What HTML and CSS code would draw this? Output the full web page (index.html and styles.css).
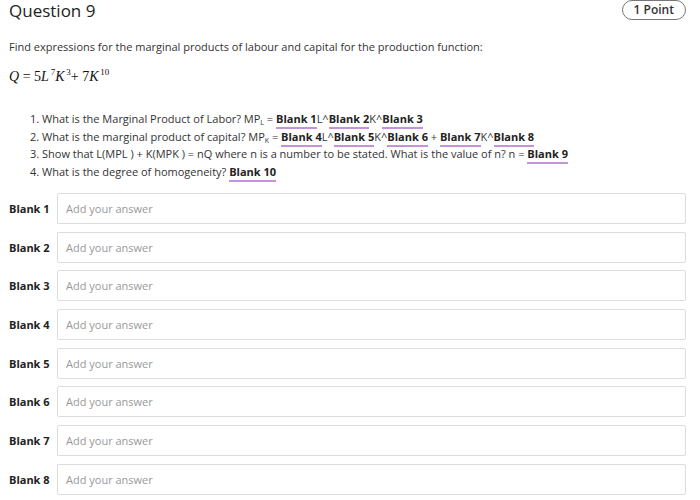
FILE: index.html
```html
<!DOCTYPE html>
<html lang="en">
<head>
    <meta charset="UTF-8">
    <title>Question 9</title>
    <link rel="stylesheet" href="styles.css">
</head>
<body>
    <div id="question">
        <div class="head">
            <span class="title">Question 9</span>
            <span class="points">1 Point</span>
        </div>

        <p class="prompt">Find expressions for the marginal products of labour and capital for the production function:</p>

        <p class="formula"><i>Q</i> = 5<i>L</i><sup>&thinsp;7</sup><i>K</i><sup>&thinsp;3</sup>+ 7<i>K</i><sup>&thinsp;10</sup></p>

        <ol class="parts">
            <li>What is the Marginal Product of Labor? MP<sub>L</sub> = <b class="blank">Blank 1</b>L^<b class="blank">Blank 2</b>K^<b class="blank">Blank 3</b></li>
            <li>What is the marginal product of capital? MP<sub>K</sub> = <b class="blank">Blank 4</b>L^<b class="blank">Blank 5</b>K^<b class="blank">Blank 6</b> + <b class="blank">Blank 7</b>K^<b class="blank">Blank 8</b></li>
            <li>Show that L(MPL ) + K(MPK ) = nQ where n is a number to be stated. What is the value of n? n = <b class="blank">Blank 9</b></li>
            <li>What is the degree of homogeneity? <b class="blank">Blank 10</b></li>
        </ol>

        <div class="answers">
            <label class="lbl">Blank 1</label><input class="box" placeholder="Add your answer">
            <label class="lbl">Blank 2</label><input class="box" placeholder="Add your answer">
            <label class="lbl">Blank 3</label><input class="box" placeholder="Add your answer">
            <label class="lbl">Blank 4</label><input class="box" placeholder="Add your answer">
            <label class="lbl">Blank 5</label><input class="box" placeholder="Add your answer">
            <label class="lbl">Blank 6</label><input class="box" placeholder="Add your answer">
            <label class="lbl">Blank 7</label><input class="box" placeholder="Add your answer">
            <label class="lbl">Blank 8</label><input class="box" placeholder="Add your answer">
        </div>
    </div>
</body>
</html>
```

FILE: styles.css
```css
body {
    margin: 0;
    background-color: white;
    font-family: "Open Sans", "Liberation Sans", sans-serif;
    color: #333;
}

#question {
    padding: 0 14px 0 9px;
}

.head {
    display: flex;
    justify-content: space-between;
    align-items: flex-start;
}

.title {
    font-size: 17px;
    line-height: 20px;
    padding-top: 1px;
    color: #222;
}

.points {
    font-size: 12px;
    font-weight: 600;
    line-height: 18px;
    padding: 0 11px;
    border: 1px solid #777;
    border-radius: 10px;
    color: #333;
}

.prompt {
    font-size: 11px;
    line-height: 18px;
    margin: 17px 0 0 0;
}

.formula {
    font-family: "Liberation Serif", "DejaVu Serif", serif;
    font-size: 14px;
    line-height: 18px;
    margin: 12px 0 0 0;
    color: #111;
}

.formula sup {
    font-size: 9px;
    vertical-align: 6px;
    line-height: 0;
}

.parts {
    font-size: 11px;
    line-height: 17.7px;
    margin: 24px 0 0 0;
    padding-left: 33px;
}

.parts sub {
    font-size: 7px;
    vertical-align: -2px;
    line-height: 0;
}

.blank {
    font-weight: 700;
    color: #222;
    border-bottom: 2px solid #c493d9;
    padding-bottom: 1px;
}

.answers {
    display: grid;
    grid-template-columns: 48px 1fr;
    row-gap: 7.7px;
    margin-top: 12px;
}

.lbl {
    font-size: 11px;
    font-weight: 700;
    color: #222;
    align-self: center;
}

.box {
    height: 31px;
    box-sizing: border-box;
    border: 1px solid #ddd;
    border-radius: 2px;
    padding: 0 8px;
    font-family: "Open Sans", "Liberation Sans", sans-serif;
    font-size: 11px;
    color: #333;
    outline: none;
}

.box::placeholder {
    color: #999;
}
```
